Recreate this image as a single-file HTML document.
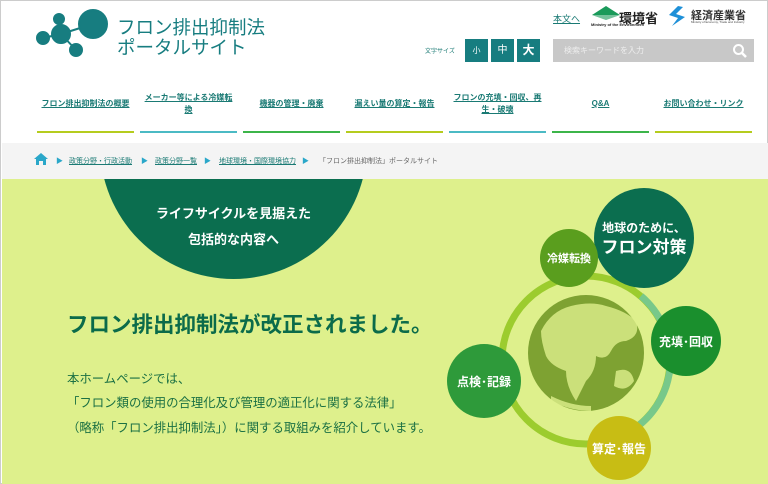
<!DOCTYPE html>
<html><head><meta charset="utf-8"><style>
*{margin:0;padding:0;box-sizing:border-box}
body{width:768px;height:484px;overflow:hidden;background:#fff;font-family:"Liberation Sans","Noto Sans CJK JP",sans-serif;position:relative;border:1px solid #ccc}
.a{position:absolute}
.nav{position:absolute;top:72px;height:62px;width:101px;text-align:center;font-size:8px;font-weight:bold;color:#1a7a74;text-decoration:underline;display:flex;align-items:center;justify-content:center;line-height:12px;padding:0 4px}
.nav i{position:absolute;left:2px;right:2px;bottom:2px;height:2px}
.bc{font-size:7px;color:#1a7a74;text-decoration:underline}
.c{position:absolute;border-radius:50%;color:#fff;font-weight:bold;display:flex;align-items:center;justify-content:center;text-align:center;white-space:nowrap}
p.t{position:absolute;left:66px;font-size:12.4px;color:#1b7043;white-space:nowrap}
</style></head><body>
<svg class="a" style="left:32px;top:5px" width="78" height="52"><g fill="#177d80" stroke="#177d80" stroke-width="2"><line x1="28" y1="28" x2="60" y2="18"/><line x1="28" y1="28" x2="10" y2="32"/><line x1="28" y1="28" x2="26" y2="13"/><line x1="28" y1="28" x2="43" y2="44"/><circle cx="60" cy="18" r="14"/><circle cx="28" cy="28" r="9"/><circle cx="10" cy="32" r="6"/><circle cx="26" cy="13" r="5"/><circle cx="43" cy="44" r="6"/></g></svg>
<div class="a" style="left:116px;top:17px;font-size:18.5px;line-height:20px;color:#177d80;white-space:nowrap">フロン排出抑制法<br>ポータルサイト</div>
<div class="a" style="left:552px;top:11px;font-size:9px;color:#1a7a74;text-decoration:underline">本文へ</div>
<svg class="a" style="left:590px;top:4px" width="30" height="16"><path d="M15 1 L29 10 L15 15 L1 10Z" fill="#1a9a5a"/><path d="M1 10 L29 10 L15 15Z" fill="#fff" opacity=".4"/></svg>
<div class="a" style="left:618px;top:7px;font-size:13px;font-weight:bold;color:#222">環境省</div>
<div class="a" style="left:590px;top:21px;font-size:4px;color:#222;font-weight:bold">Ministry of the Environment</div>
<svg class="a" style="left:665px;top:4px" width="22" height="22"><path d="M12 1 L3 10 L12 13 L6 21 L19 12 L10 9 L17 2Z" fill="#1e90d8"/></svg>
<div class="a" style="left:690px;top:6px;font-size:11px;font-weight:bold;color:#333">経済産業省</div>
<div class="a" style="left:690px;top:19px;font-size:3px;color:#444">Ministry of Economy, Trade and Industry</div>
<div class="a" style="left:424px;top:45px;font-size:6px;color:#1a7a74">文字サイズ</div>
<div class="a" style="left:464px;top:38px;width:23px;height:23px;background:#177d80;color:#fff;font-size:8px;text-align:center;line-height:23px">小</div>
<div class="a" style="left:490px;top:38px;width:23px;height:23px;background:#177d80;color:#fff;font-size:10px;text-align:center;line-height:23px">中</div>
<div class="a" style="left:516px;top:38px;width:23px;height:23px;background:#177d80;color:#fff;font-size:12px;text-align:center;line-height:23px;font-weight:bold">大</div>
<div class="a" style="left:552px;top:38px;width:201px;height:23px;background:#c8c8c8;color:#eee;font-size:8px;line-height:23px;padding-left:11px">検索キーワードを入力</div>
<svg class="a" style="left:731px;top:42px" width="16" height="16"><circle cx="6.5" cy="6.5" r="4.5" fill="none" stroke="#fff" stroke-width="2"/><line x1="10" y1="10" x2="14" y2="14" stroke="#fff" stroke-width="2.5"/></svg>
<div class="nav" style="left:34px">フロン排出抑制法の概要<i style="background:#b5cc1e"></i></div>
<div class="nav" style="left:137px">メーカー等による冷媒転換<i style="background:#4bbac4"></i></div>
<div class="nav" style="left:240px">機器の管理・廃棄<i style="background:#3cb54a"></i></div>
<div class="nav" style="left:343px">漏えい量の算定・報告<i style="background:#b5cc1e"></i></div>
<div class="nav" style="left:446px">フロンの充填・回収、再生・破壊<i style="background:#4bbac4"></i></div>
<div class="nav" style="left:549px">Q&amp;A<i style="background:#3cb54a"></i></div>
<div class="nav" style="left:652px">お問い合わせ・リンク<i style="background:#b5cc1e"></i></div>
<div class="a" style="left:1px;top:142px;width:766px;height:36px;background:#f4f4f4"></div>
<svg class="a" style="left:33px;top:152px" width="14" height="12"><path d="M7 0 L14 6 L12 6 L12 12 L9 12 L9 8 L5 8 L5 12 L2 12 L2 6 L0 6Z" fill="#2aa7c9"/></svg>
<div class="a" style="left:0;top:155px;font-size:7px;color:#2aa7c9">
<span class="a" style="left:55px">▶</span><span class="a bc" style="left:68px;width:80px">政策分野・行政活動</span>
<span class="a" style="left:140px">▶</span><span class="a bc" style="left:154px;width:60px">政策分野一覧</span>
<span class="a" style="left:203px">▶</span><span class="a bc" style="left:218px;width:90px">地球環境・国際環境協力</span>
<span class="a" style="left:301px">▶</span><span class="a" style="left:318px;width:140px;color:#666">「フロン排出抑制法」ポータルサイト</span></div>
<div class="a" style="left:1px;top:178px;width:766px;height:305px;background:#def08c;overflow:hidden">
<div class="a" style="left:98px;top:-167px;width:267px;height:267px;border-radius:50%;background:#0b6e4f"></div>
<div class="a" style="left:98px;top:22px;width:267px;text-align:center;color:#fff;font-size:13px;font-weight:bold;line-height:26px">ライフサイクルを見据えた<br>包括的な内容へ</div>
</div>
<div class="a" style="left:66px;top:307px;font-size:21.5px;font-weight:bold;color:#0b6b4a;white-space:nowrap">フロン排出抑制法が改正されました。</div>
<p class="t" style="top:368px">本ホームページでは、</p>
<p class="t" style="top:392px">「フロン類の使用の合理化及び管理の適正化に関する法律」</p>
<p class="t" style="top:417px">（略称「フロン排出抑制法」）に関する取組みを紹介しています。</p>
<svg class="a" style="left:480px;top:255px" width="210" height="210"><circle cx="105" cy="104" r="84" fill="none" stroke="#9ccc2e" stroke-width="7"/><path d="M160 40 A84 84 0 0 1 150 175" fill="none" stroke="#78c88a" stroke-width="7"/><circle cx="105" cy="97" r="58" fill="#7ea232"/><path d="M60 75 q10-20 30-25 q20-5 35 0 q20 5 30 15 q5 15-10 20 q-10 0-15 10 q-5 10-15 5 q0 15-10 25 q-5 10-10 20 q-10-15-10-30 q-15-5-20-15 q-5-15-5-25z M135 115 q15-5 18 10 q-8 12-20 5z M70 140 q20 10 40 10 l0 5 q-20 0-40-10z" fill="#def08c" opacity=".8"/></svg>
<div class="c" style="left:593px;top:187px;width:100px;height:100px;background:#0b6e4f"><div style="font-size:12px;line-height:20px">地球のために、<br><span style="font-size:17px">フロン対策</span></div></div>
<div class="c" style="left:539px;top:228px;width:58px;height:58px;background:#5a9e1e;font-size:11px">冷媒転換</div>
<div class="c" style="left:650px;top:305px;width:70px;height:70px;background:#1a8f2d;font-size:12px">充填･回収</div>
<div class="c" style="left:446px;top:343px;width:74px;height:74px;background:#2e9a3a;font-size:12px">点検･記録</div>
<div class="c" style="left:586px;top:415px;width:64px;height:64px;background:#c8bd14;font-size:12px">算定･報告</div>
</body></html>
